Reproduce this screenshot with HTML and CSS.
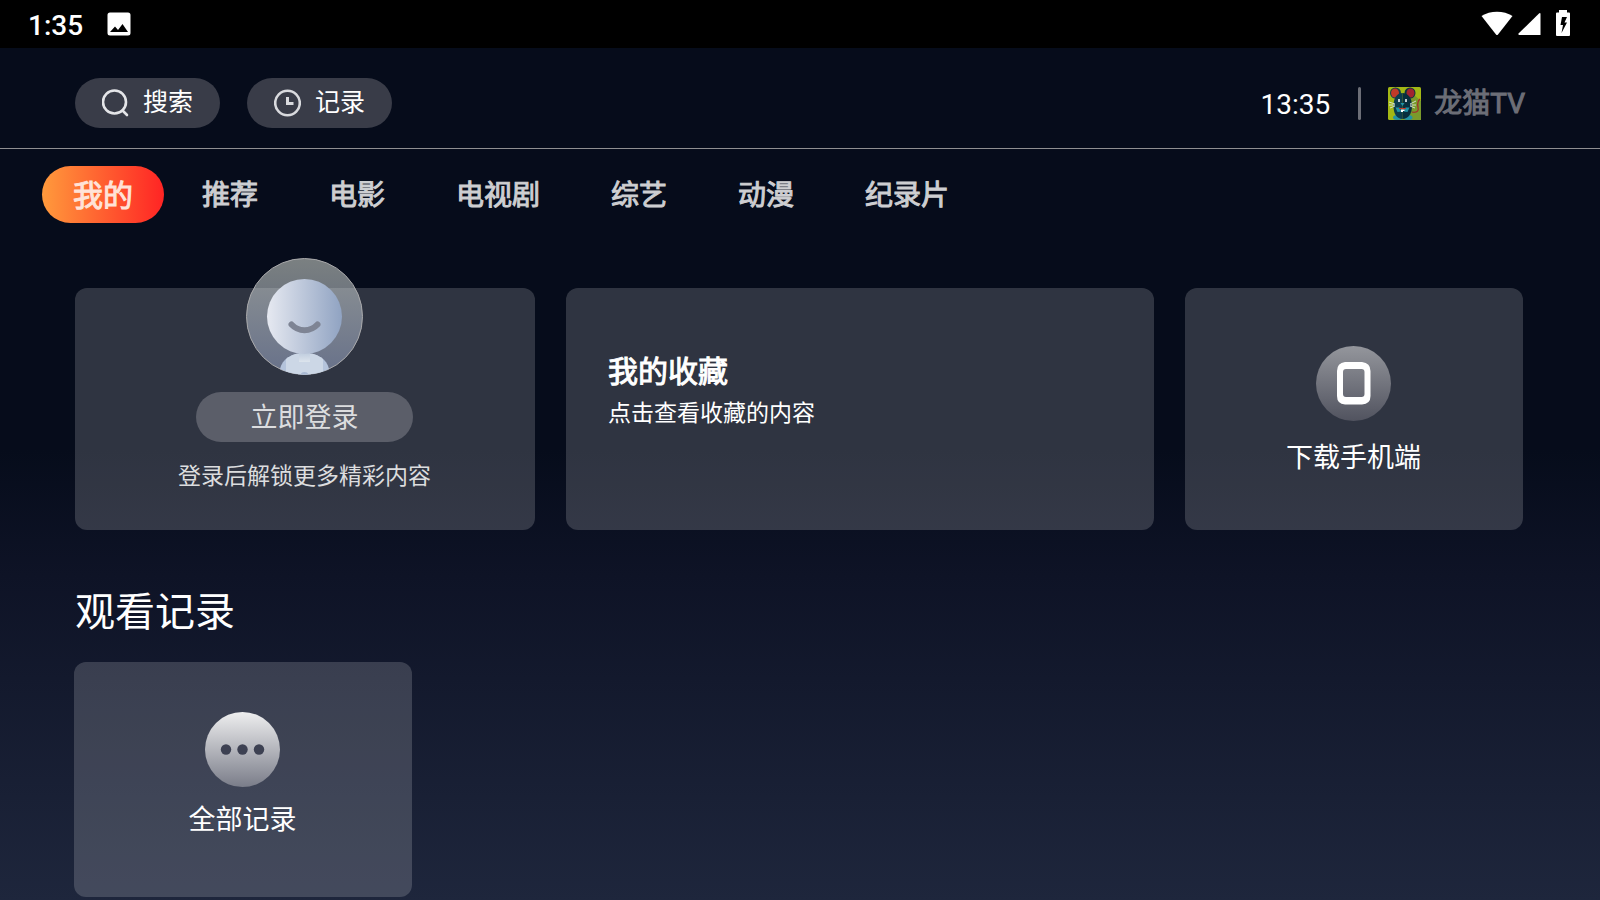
FILE: index.html
```
<!DOCTYPE html>
<html lang="zh-CN">
<head>
  <meta charset="UTF-8">
  <meta name="viewport" content="width=device-width, initial-scale=1">
  <title>龙猫TV</title>
  <link rel="stylesheet" href="styles.css">
</head>
<body>
  <div class="status-bar">
    <div class="status-left">
      <span class="status-time">1:35</span>
      <svg class="status-photo" width="24" height="24" viewBox="0 0 24 24">
        <path fill="#fff" fill-rule="evenodd" d="M3 .5h18A2.500 2.500 0 0 1 23.500 3v18a2.500 2.500 0 0 1-2.500 2.500H3A2.500 2.500 0 0 1 .5 21V3A2.500 2.500 0 0 1 3 .5zM3 20h18l-5.500-8-4.500 6-3-3.500z"/>
      </svg>
    </div>
    <div class="status-right">
      <svg width="32" height="26" viewBox="0 0 32 26">
        <path fill="#fff" d="M.5 6C9 .2 23 .2 31.500 6L17 24.500q-1 1-2 0z"/>
      </svg>
      <svg width="23" height="26" viewBox="0 0 23 26">
        <path fill="#fff" d="M22.500 3.500V25H1q-1-.5-.5-1.500L21 3.500q1-.8 1.500 0z"/>
      </svg>
      <svg class="status-battery" width="14" height="26" viewBox="0 0 14 26">
        <path fill="#fff" fill-rule="evenodd" d="M3 0h8v2.500h2q1 0 1 1V25q0 1-1 1H1q-1 0-1-1V3.500q0-1 1-1h2zM6 7l-1.500 8h2.500L5.500 23 11 12.500H8.500L11 7z"/>
      </svg>
    </div>
  </div>

  <header class="top-bar">
    <div class="top-actions">
      <button type="button" class="pill">
        <svg width="27" height="28" viewBox="0 0 27 28" fill="none" stroke="#e4e5e8" stroke-width="2.600" stroke-linecap="round">
          <circle cx="12.500" cy="13" r="11.500"/>
          <path d="M20.500 21.500l4.500 4.500"/>
        </svg>
        搜索
      </button>
      <button type="button" class="pill">
        <svg width="27" height="28" viewBox="0 0 27 28" fill="none" stroke="#d9dade" stroke-width="2.600">
          <circle cx="13.500" cy="14" r="12.300"/>
          <path d="M13.500 8v6.500h6" stroke-width="3"/>
        </svg>
        记录
      </button>
    </div>
    <div class="top-info">
      <span class="clock">13:35</span>
      <span class="divider"></span>
      <svg class="logo" width="33" height="33" viewBox="0 0 33 33">
        <rect width="33" height="33" rx="1.500" fill="#a4b815"/>
        <path fill="#7a9a2b" d="M25 7l8 7v19H10z"/>
        <path d="M24 25c5 1 7-1 6-5s0-6 2-8" fill="none" stroke="#a5282c" stroke-width="1.200"/>
        <ellipse cx="9.500" cy="30.500" rx="4.500" ry="2.500" fill="#2293a6"/>
        <ellipse cx="20" cy="30.500" rx="4.500" ry="2.500" fill="#2293a6"/>
        <circle cx="7.500" cy="6" r="5.500" fill="#123f4d"/>
        <circle cx="22" cy="6" r="5.500" fill="#0d3341"/>
        <ellipse cx="7" cy="6" rx="4" ry="4.500" fill="#c23a28"/>
        <ellipse cx="22.500" cy="6" rx="4" ry="4.500" fill="#a12430"/>
        <path fill="#0d3d4e" d="M14.500 6C9 6 5.500 11 5.500 19S9 32 14.500 32z"/>
        <path fill="#082f3e" d="M14.500 6C20 6 24 11 24 19s-4 13-9.500 13z"/>
        <path d="M11 12v3M18 12v3" stroke="#fff" stroke-width="1.500"/>
        <path fill="#2293a6" d="M12.500 16h4l-2 3zM7.500 20.500h4l2 4-4 .5zM21.500 20.500h-4l-2 4 4 .5z"/>
        <path d="M1 15l6 2M1 18h6M2 21l5-2M28 14l-6 3M28 18h-6M27 21l-5-2" stroke="#dbe6dc" stroke-width=".9"/>
        <path d="M11 21.500h7" stroke="#c23a28"/>
        <path fill="#fff" d="M13 22.500h3.500v1.500h-1.500v1h-2z"/>
      </svg>
      <span class="brand">龙猫TV</span>
    </div>
  </header>

  <nav class="tabs">
    <button type="button" class="tab active">我的</button>
    <button type="button" class="tab">推荐</button>
    <button type="button" class="tab">电影</button>
    <button type="button" class="tab">电视剧</button>
    <button type="button" class="tab">综艺</button>
    <button type="button" class="tab">动漫</button>
    <button type="button" class="tab">纪录片</button>
  </nav>

  <main class="content">
    <section class="cards">
      <div class="card login-card">
        <svg class="avatar" width="117" height="117" viewBox="0 0 117 117">
          <defs>
            <linearGradient id="ring" x1="0" y1="0" x2="0" y2="1">
              <stop offset="0" stop-color="#f0f5e8" stop-opacity=".5"/>
              <stop offset="1" stop-color="#a0aed2" stop-opacity=".5"/>
            </linearGradient>
            <linearGradient id="face" x1="0" y1="0" x2="1" y2="0">
              <stop offset="0" stop-color="#e6e9f1"/>
              <stop offset="1" stop-color="#90a3c2"/>
            </linearGradient>
            <linearGradient id="neck" x1="0" y1="0" x2="0" y2="1">
              <stop offset="0" stop-color="#b9c7da"/>
              <stop offset="1" stop-color="#dce4ed"/>
            </linearGradient>
            <clipPath id="round"><circle cx="58.500" cy="58.500" r="58"/></clipPath>
          </defs>
          <circle cx="58.500" cy="58.500" r="58" fill="url(#ring)" stroke="#a9a9ab" stroke-width="1"/>
          <g clip-path="url(#round)">
            <path fill="#b4c3db" d="M34 117v-6c2-10 12-16 24.500-16S81 101 83 111v6z"/>
            <path fill="#ccd7e6" d="M40 117v-16c5-4 10-6 18.500-6S72 97 77 101v16z"/>
            <rect x="53" y="93" width="11" height="11" fill="url(#neck)"/>
            <circle cx="58.500" cy="118" r="4" fill="#a9b9d3"/>
          </g>
          <circle cx="58.500" cy="58.500" r="37.500" fill="url(#face)"/>
          <path d="M45.500 66.500c7 7.500 19 7.500 26 0" fill="none" stroke="#7e8494" stroke-width="6" stroke-linecap="round"/>
        </svg>
        <button type="button" class="login-btn">立即登录</button>
        <p class="login-tip">登录后解锁更多精彩内容</p>
      </div>

      <a href="#" class="card fav-card">
        <h2 class="fav-title">我的收藏</h2>
        <p class="fav-sub">点击查看收藏的内容</p>
      </a>

      <button type="button" class="card icon-card">
        <svg width="75" height="75" viewBox="0 0 75 75">
          <defs>
            <linearGradient id="phone" x1="0" y1="0" x2="0" y2="1">
              <stop offset="0" stop-color="#94969c"/>
              <stop offset="1" stop-color="#51535f"/>
            </linearGradient>
          </defs>
          <circle cx="37.500" cy="37.500" r="37.500" fill="url(#phone)"/>
          <path fill="#fff" fill-rule="evenodd" d="M29 16h17q8.500 1 8.500 9v25q0 8-8.500 8.500H29q-8-.5-8-8.500V25q0-8 8-9zM30 23q-3 0-3 3v22q0 3 3 3h15.500q3 0 3-3V26q0-3-3-3z"/>
        </svg>
        <span class="icon-label">下载手机端</span>
      </button>
    </section>

    <h1 class="section-title">观看记录</h1>

    <section class="records">
      <button type="button" class="card icon-card record-card">
        <svg width="75" height="75" viewBox="0 0 75 75">
          <defs>
            <linearGradient id="more" x1="0" y1="0" x2="0" y2="1">
              <stop offset="0" stop-color="#eeeeef"/>
              <stop offset="1" stop-color="#7a7d89"/>
            </linearGradient>
          </defs>
          <circle cx="37.500" cy="37.500" r="37.500" fill="url(#more)"/>
          <g fill="#3d4152">
            <circle cx="21" cy="37.500" r="5.200"/>
            <circle cx="37.500" cy="37.500" r="5.200"/>
            <circle cx="54" cy="37.500" r="5.200"/>
          </g>
        </svg>
        <span class="icon-label">全部记录</span>
      </button>
    </section>
  </main>
</body>
</html>
```

FILE: styles.css
```
* {
  box-sizing: border-box;
}
body {
  margin: 0;
  min-height: 100vh;
  font-family: Roboto, 'Noto Sans CJK SC', sans-serif;
  color: #fff;
  background: linear-gradient(to bottom, #060c1b 0%, #060c1b 50%, #0e1326 64%, #1e263c 100%);
}
button {
  border: none;
  padding: 0;
  font-family: inherit;
  color: inherit;
  background: none;
  cursor: pointer;
}
svg {
  display: block;
  flex-shrink: 0;
}
h1, h2, p {
  margin: 0;
  font-weight: 400;
}

/* system bar */
.status-bar {
  display: flex;
  justify-content: space-between;
  align-items: center;
  height: 48px;
  padding: 0 30px 0 28px;
  background: #000;
}
.status-left, .status-right {
  display: flex;
  align-items: center;
}
.status-left {
  gap: 24px;
}
.status-right {
  gap: 5px;
  padding-bottom: 2px;
}
.status-battery {
  margin-left: 10px;
}
.status-time {
  padding-top: 3px;
  font-size: 28px;
  font-weight: 500;
  line-height: 44px;
}

/* top bar */
.top-bar {
  display: flex;
  justify-content: space-between;
  align-items: center;
  height: 101px;
  padding: 9px 75px 0;
  border-bottom: 1px solid #8f8f91;
}
.top-actions {
  display: flex;
  gap: 27px;
}
.pill {
  display: flex;
  align-items: center;
  gap: 14px;
  height: 50px;
  padding: 0 27px;
  border-radius: 25px;
  font-size: 25px;
  line-height: 52px;
  background: #393c48;
}
.top-info {
  display: flex;
  align-items: center;
  padding-top: 2px;
}
.clock {
  padding-top: 2px;
  font-size: 28px;
  line-height: 34px;
}
.divider {
  width: 3px;
  height: 33px;
  margin: 0 27px 0 28px;
  border-radius: 2px;
  background: #6c6e77;
}
.brand {
  margin-left: 13px;
  font-size: 28px;
  line-height: 34px;
  color: #6c6e77;
  -webkit-text-stroke: 1px #6c6e77;
}

/* tabs */
.tabs {
  display: flex;
  align-items: center;
  gap: 5px;
  padding: 16px 42px 0;
}
.tab {
  padding: 3px 33px 0;
  font-size: 28px;
  line-height: 55px;
  color: #cdced1;
  -webkit-text-stroke: 1px #cdced1;
}
.tab.active {
  padding: 2px 31px 0;
  border-radius: 29px;
  font-size: 30px;
  color: #ffe3d8;
  -webkit-text-stroke: 1px #ffe3d8;
  background: linear-gradient(to right, #ff9a3c, #ff2424);
}

/* cards */
.content {
  padding: 65px 77px 3px 75px;
}
.cards {
  display: grid;
  grid-template-columns: 460fr 588fr 338fr;
  gap: 31px;
}
.card {
  display: flex;
  flex-direction: column;
  height: 242px;
  border-radius: 12px;
  color: #fff;
  text-decoration: none;
  background: rgba(255, 255, 255, 0.17);
}
.login-card {
  align-items: center;
  padding-right: 1px;
}
.avatar {
  margin-top: -30px;
}
.login-btn {
  width: 217px;
  height: 50px;
  margin-top: 17px;
  padding-top: 2px;
  border-radius: 25px;
  font-size: 27px;
  line-height: 48px;
  color: #dcdddf;
  background: #5b5e69;
}
.login-tip {
  margin-top: 18px;
  font-size: 23px;
  line-height: 34px;
  color: #dcdddf;
}
.fav-card {
  padding: 62px 42px;
}
.fav-title {
  font-size: 30px;
  line-height: 44px;
  -webkit-text-stroke: 1px #fff;
}
.fav-sub {
  margin-top: 3px;
  font-size: 23px;
  line-height: 34px;
}
.icon-card {
  align-items: center;
  padding-top: 58px;
  padding-right: 1px;
}
.icon-label {
  margin-top: 17px;
  font-size: 27px;
  line-height: 40px;
}
.section-title {
  margin-top: 53px;
  font-size: 40px;
  line-height: 60px;
}
.records {
  margin-left: -1px;
}
.record-card {
  width: 338px;
  height: 235px;
  margin-top: 19px;
  padding-top: 50px;
}
.record-card .icon-label {
  margin-top: 13px;
}
```
